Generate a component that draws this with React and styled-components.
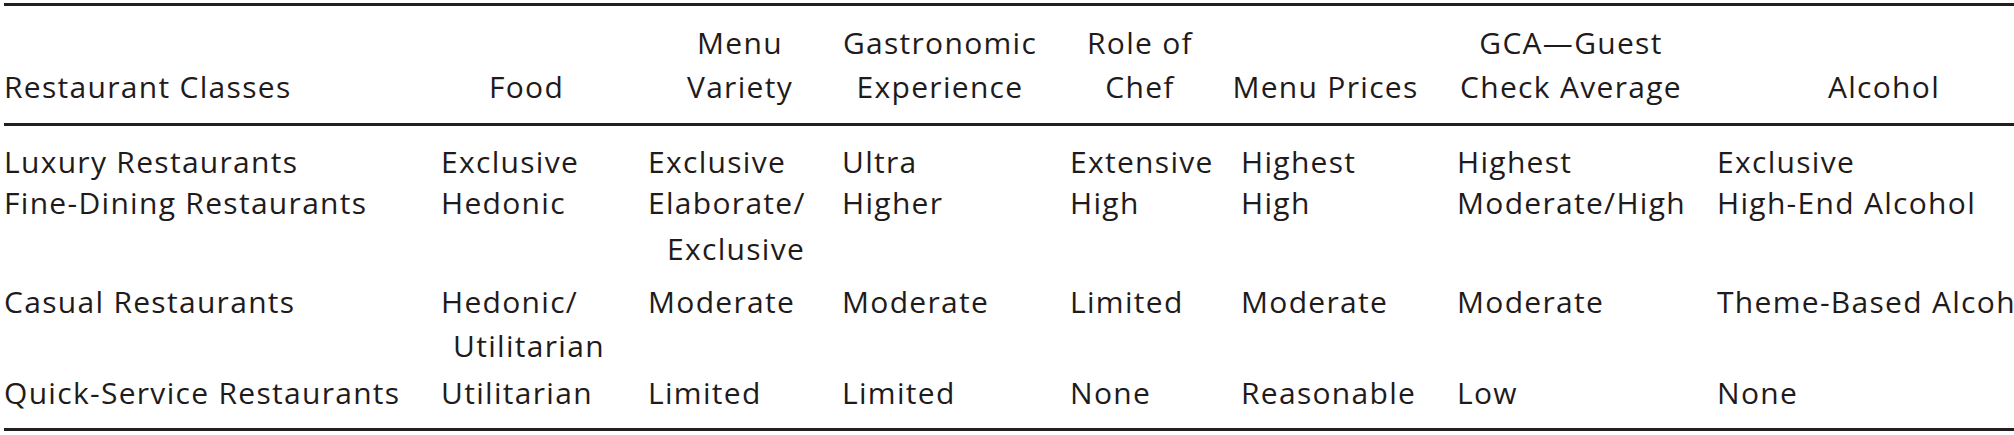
import React from 'react';
import styled, { createGlobalStyle } from 'styled-components';

const GlobalStyle = createGlobalStyle`
  html, body {
    margin: 0;
    padding: 0;
    background: #ffffff;
    overflow: hidden;
  }
  body {
    font-family: "Open Sans", "Liberation Sans", sans-serif;
    color: #1f1b1c;
  }
`;

// track width of each column (content + space after it)
const COLS = [437, 207, 194, 228, 156, 229, 262, 334];
// width the header text is centred over
const SPANS = [400, 171, 184, 196, 140, 199, 232, 334];
// left offset of body text inside the column
const INDENTS = [0, 0, 0, 0, 0, 15, 2, 0];
// hanging indent for a wrapped second line
const HANGS = [0, 12, 19, 0, 0, 0, 0, 0];

const Table = styled.div`
  margin: 3px 0 0 4px;
  width: ${COLS.reduce((a, b) => a + b, 0)}px;
  border-top: 3px solid #231f20;
  font-size: 30px;
  font-weight: 500;
  letter-spacing: 1.3px;
`;

const HeadRow = styled.div`
  display: grid;
  grid-template-columns: ${COLS.map((w) => `${w}px`).join(' ')};
  padding: 15px 0 14px;
  border-bottom: 3px solid #231f20;
  line-height: 44px;
`;

const HeadCell = styled.div`
  width: ${(p) => p.$span}px;
  display: flex;
  flex-direction: column;
  justify-content: flex-end;
  text-align: ${(p) => (p.$left ? 'left' : 'center')};
  white-space: nowrap;
`;

const Body = styled.div`
  padding: 15px 0 15px;
  border-bottom: 3px solid #231f20;
`;

const Row = styled.div`
  display: grid;
  grid-template-columns: ${COLS.map((w) => `${w}px`).join(' ')};
  line-height: 41px;
  padding-bottom: ${(p) => p.$pb || 0}px;
`;

const Cell = styled.div`
  padding-left: ${(p) => p.$indent}px;
  white-space: nowrap;
`;

const Line = styled.div`
  padding-left: ${(p) => p.$hang || 0}px;
  margin-top: ${(p) => p.$gap || 0}px;
`;

const headers = [
  'Restaurant Classes',
  'Food',
  ['Menu', 'Variety'],
  ['Gastronomic', 'Experience'],
  ['Role of', 'Chef'],
  'Menu Prices',
  ['GCA\u2014Guest', 'Check Average'],
  'Alcohol',
];

const rows = [
  {
    cells: ['Luxury Restaurants', 'Exclusive', 'Exclusive', 'Ultra', 'Extensive', 'Highest', 'Highest', 'Exclusive'],
  },
  {
    gap: 5,
    pb: 12,
    cells: ['Fine-Dining Restaurants', 'Hedonic', ['Elaborate/', 'Exclusive'], 'Higher', 'High', 'High', 'Moderate/High', 'High-End Alcohol'],
  },
  {
    gap: 3,
    pb: 6,
    cells: ['Casual Restaurants', ['Hedonic/', 'Utilitarian'], 'Moderate', 'Moderate', 'Limited', 'Moderate', 'Moderate', 'Theme-Based Alcohol'],
  },
  {
    cells: ['Quick-Service Restaurants', 'Utilitarian', 'Limited', 'Limited', 'None', 'Reasonable', 'Low', 'None'],
  },
];

export default function App() {
  return (
    <>
      <GlobalStyle />
      <Table>
        <HeadRow>
          {headers.map((h, i) => (
            <HeadCell key={i} $span={SPANS[i]} $left={i === 0}>
              {[].concat(h).map((t) => (
                <div key={t}>{t}</div>
              ))}
            </HeadCell>
          ))}
        </HeadRow>

        <Body>
          {rows.map((r, ri) => (
            <Row key={ri} $pb={r.pb}>
              {r.cells.map((c, ci) => (
                <Cell key={ci} $indent={INDENTS[ci]}>
                  {[].concat(c).map((t, li) => (
                    <Line key={li} $hang={li ? HANGS[ci] : 0} $gap={li ? r.gap : 0}>
                      {t}
                    </Line>
                  ))}
                </Cell>
              ))}
            </Row>
          ))}
        </Body>
      </Table>
    </>
  );
}
